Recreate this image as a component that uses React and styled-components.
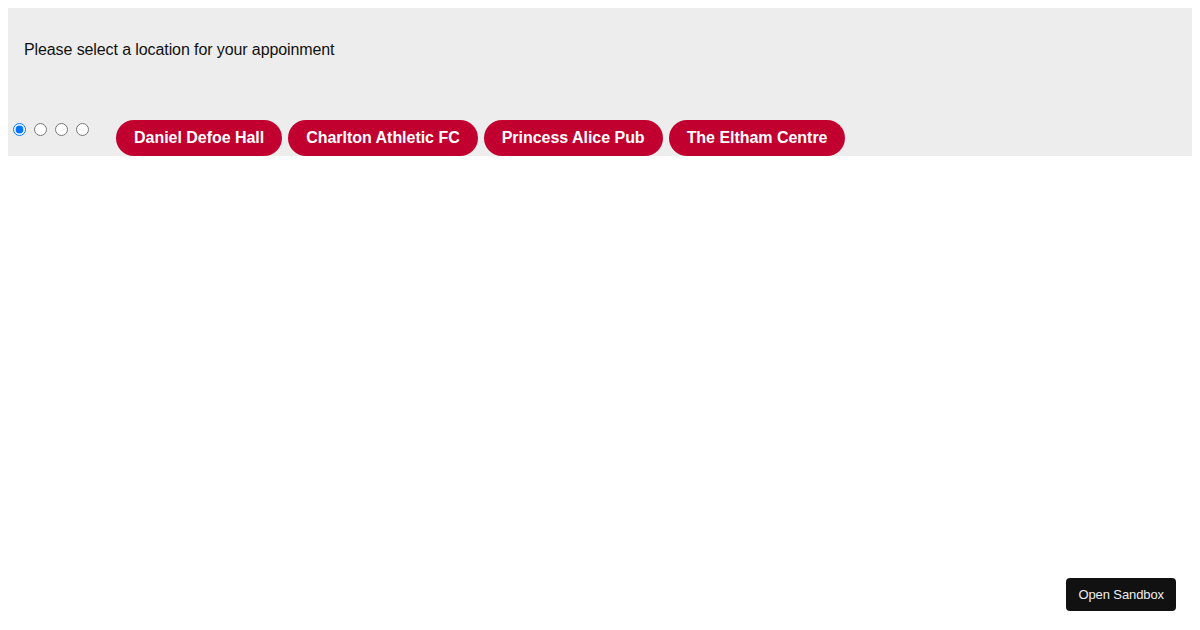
import React, { useState } from 'react'
import styled, { createGlobalStyle } from 'styled-components'

const GlobalStyle = createGlobalStyle`
    body {
        margin: 8px;
        background: #fff;
        font-family: 'Liberation Sans', Arial, sans-serif;
    }
`

const Panel = styled.div`
    background: #ededed;
`

const Prompt = styled.p`
    margin: 0;
    padding: 33px 16px 61px;
    font-size: 16px;
    line-height: 18px;
    letter-spacing: -0.1px;
    color: #111;
`

const Row = styled.div`
    display: flex;
    align-items: flex-start;
`

const Radios = styled.div`
    display: flex;
    margin-right: 24px;
`

const Radio = styled.input`
    margin: 3px 3px 0 5px;
    width: 13px;
    height: 13px;
`

const Buttons = styled.div`
    display: flex;
    gap: 6px;
`

const LocationButton = styled.button`
    height: 36px;
    padding: 0 18px;
    border: none;
    border-radius: 18px;
    background: #c10030;
    color: #fff;
    font-family: 'Liberation Sans', Arial, sans-serif;
    font-weight: bold;
    font-size: 16px;
    letter-spacing: -0.03px;
    cursor: pointer;
`

const SandboxButton = styled.button`
    position: fixed;
    right: 24px;
    bottom: 19px;
    height: 33px;
    padding: 0 12px;
    border: none;
    border-radius: 4px;
    background: #111;
    color: #eee;
    font-family: 'Liberation Sans', Arial, sans-serif;
    font-size: 13px;
    letter-spacing: -0.1px;
`

const locations = ['Daniel Defoe Hall', 'Charlton Athletic FC', 'Princess Alice Pub', 'The Eltham Centre']

export default function App() {
    const [selected, setSelected] = useState(0)
    return (
        <>
            <GlobalStyle />
            <Panel>
                <Prompt>Please select a location for your appoinment</Prompt>
                <Row>
                    <Radios>
                        {locations.map((loc, i) => (
                            <Radio
                                key={loc}
                                type="radio"
                                name="location"
                                checked={selected === i}
                                onChange={() => setSelected(i)}
                            />
                        ))}
                    </Radios>
                    <Buttons>
                        {locations.map((loc, i) => (
                            <LocationButton key={loc} onClick={() => setSelected(i)}>
                                {loc}
                            </LocationButton>
                        ))}
                    </Buttons>
                </Row>
            </Panel>
            <SandboxButton>Open Sandbox</SandboxButton>
        </>
    )
}
